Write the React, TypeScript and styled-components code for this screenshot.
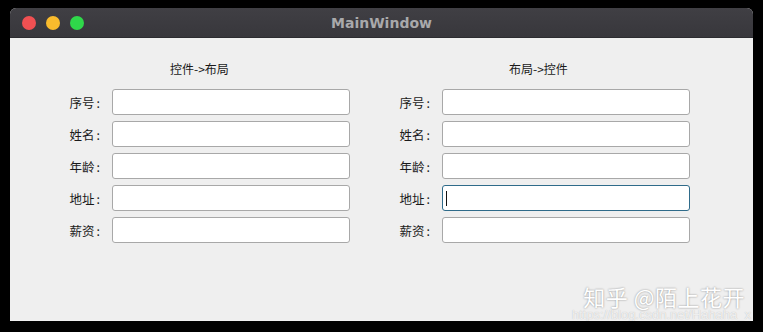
import React from 'react';
import styled, { createGlobalStyle } from 'styled-components';

const GlobalStyle = createGlobalStyle`
    html, body {
        margin: 0;
        padding: 0;
        background: #000;
        width: 763px;
        height: 332px;
        overflow: hidden;
    }
`;

const Screen = styled.div`
    width: 763px;
    height: 332px;
    padding: 8px 10px 11px 10px;
    box-sizing: border-box;
    background: #000;
`;

const Window = styled.div`
    width: 743px;
    height: 313px;
    display: flex;
    flex-direction: column;
    border-radius: 6px 6px 0 0;
    overflow: hidden;
    background: #efefef;
    position: relative;
`;

const TitleBar = styled.div`
    height: 30px;
    flex-shrink: 0;
    background: linear-gradient(#403f44, #38373c);
    border-bottom: 1px solid #2c2c30;
    box-sizing: border-box;
    display: flex;
    align-items: center;
    position: relative;
    padding-left: 12px;
    gap: 10px;
`;

const Light = styled.span<{ $color: string }>`
    width: 14px;
    height: 14px;
    border-radius: 50%;
    background: ${p => p.$color};
`;

const Title = styled.div`
    position: absolute;
    left: 0;
    right: 0;
    text-align: center;
    font-family: "DejaVu Sans", "Noto Sans", sans-serif;
    font-weight: bold;
    font-size: 14px;
    color: #a9a9ab;
    pointer-events: none;
`;

const Content = styled.div`
    flex: 1;
    display: flex;
    padding: 19px 0 0 46px;
    gap: 36px;
    font-family: "Noto Sans CJK SC", "Noto Sans", sans-serif;
    font-size: 12.5px;
    color: #1a1a1a;
`;

const Group = styled.div<{ $width: number }>`
    width: ${p => p.$width}px;
    display: flex;
    flex-direction: column;
`;

const Heading = styled.div<{ $indent: number }>`
    height: 24px;
    line-height: 24px;
    padding-left: ${p => p.$indent}px;
    margin-bottom: 8px;
    font-size: 12px;
`;

const Form = styled.div`
    display: flex;
    flex-direction: column;
    gap: 6px;
`;

const Row = styled.div`
    display: flex;
    align-items: center;
    gap: 12px;
`;

const Label = styled.label`
    width: 44px;
    text-align: right;

    span {
        margin-left: 2px;
    }
`;

const Field = styled.div<{ $width: number; $focused?: boolean }>`
    width: ${p => p.$width}px;
    height: 26px;
    box-sizing: border-box;
    background: #fff;
    border: 1px solid ${p => (p.$focused ? '#2f6b8a' : '#a8a8a8')};
    border-radius: 3px;
    position: relative;
`;

const Caret = styled.span`
    position: absolute;
    left: 3px;
    top: 5px;
    width: 1px;
    height: 15px;
    background: #111;
`;

const Watermark = styled.div`
    position: absolute;
    right: 8px;
    bottom: 14px;
    font-family: "Noto Sans CJK SC", "Noto Sans", sans-serif;
    font-size: 22px;
    line-height: 22px;
    color: #fff;
    text-shadow: 0 0 2px rgba(0, 0, 0, 0.45);
    letter-spacing: 0.5px;
`;

const Url = styled.div`
    position: absolute;
    right: 2px;
    bottom: 0;
    font-family: "Liberation Sans", sans-serif;
    font-size: 13px;
    line-height: 13px;
    color: rgba(255, 255, 255, 0.75);
    text-shadow: 0 0 1px rgba(0, 0, 0, 0.25);
`;

const labels = ['序号', '姓名', '年龄', '地址', '薪资'];

type PanelProps = {
    heading: string;
    indent: number;
    width: number;
    fieldWidth: number;
    focusIndex?: number;
};

const Panel = ({ heading, indent, width, fieldWidth, focusIndex }: PanelProps) => (
    <Group $width={width}>
        <Heading $indent={indent}>{heading}</Heading>
        <Form>
            {labels.map((l, i) => (
                <Row key={l}>
                    <Label>
                        {l}
                        <span>:</span>
                    </Label>
                    <Field $width={fieldWidth} $focused={i === focusIndex}>
                        {i === focusIndex && <Caret />}
                    </Field>
                </Row>
            ))}
        </Form>
    </Group>
);

export default function App() {
    return (
        <>
            <GlobalStyle />
            <Screen>
                <Window>
                    <TitleBar>
                        <Light $color="#f05052" />
                        <Light $color="#f9bb2d" />
                        <Light $color="#2fd84a" />
                        <Title>MainWindow</Title>
                    </TitleBar>
                    <Content>
                        <Panel heading="控件->布局" indent={114} width={294} fieldWidth={238} />
                        <Panel heading="布局->控件" indent={123} width={304} fieldWidth={248} focusIndex={3} />
                    </Content>
                    <Watermark>知乎 @陌上花开</Watermark>
                    <Url>https://blog.csdn.net/Hahaha_x</Url>
                </Window>
            </Screen>
        </>
    );
}
